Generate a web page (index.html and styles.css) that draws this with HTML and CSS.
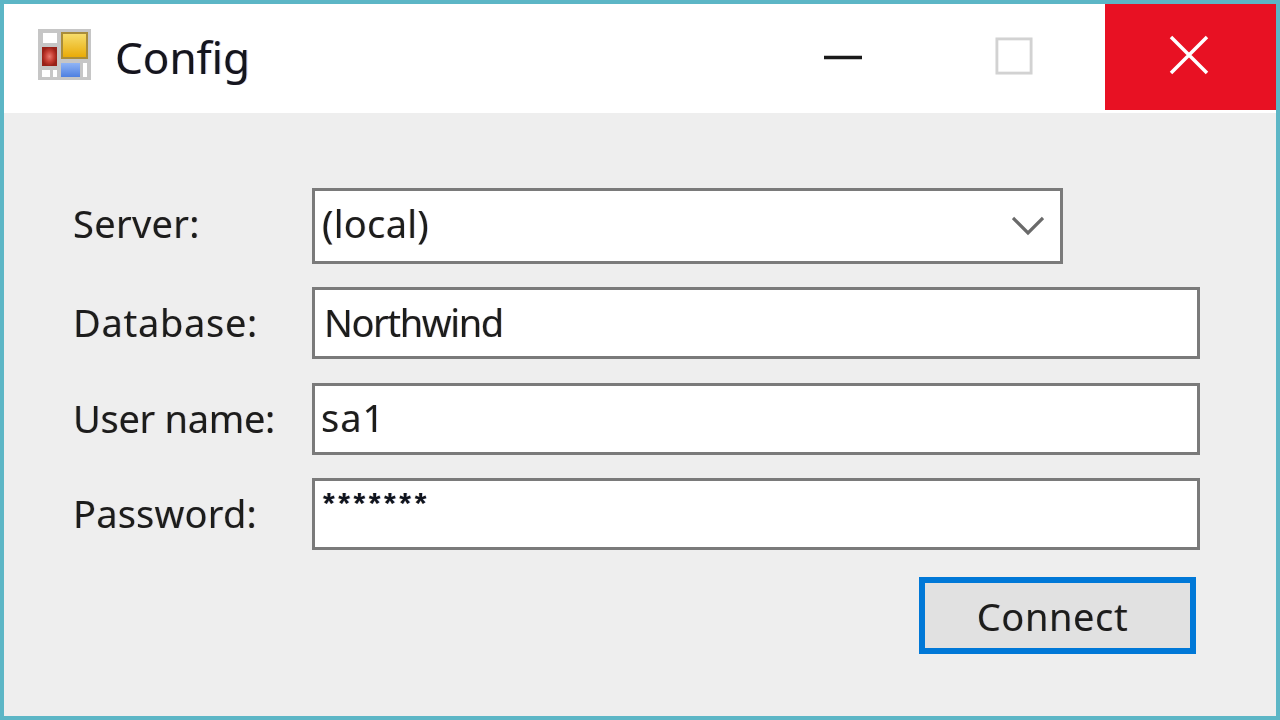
FILE: index.html
```html
<!DOCTYPE html>
<html lang="en">
<head>
<meta charset="utf-8">
<title>Config</title>
<link rel="stylesheet" href="styles.css">
</head>
<body>
<div class="window">
  <header class="titlebar">
    <svg class="app-icon" viewBox="0 0 53 51" aria-hidden="true">
      <defs>
        <linearGradient id="gold" x1="0" y1="0" x2="0" y2="1"><stop offset="0" stop-color="#f6dc6a"/><stop offset="1" stop-color="#e9ab08"/></linearGradient>
        <linearGradient id="sky" x1="0" y1="0" x2="0" y2="1"><stop offset="0" stop-color="#8fb4f5"/><stop offset="1" stop-color="#4f80e0"/></linearGradient>
        <radialGradient id="ruby"><stop offset="0" stop-color="#ea7a70"/><stop offset="0.6" stop-color="#c33a30"/><stop offset="1" stop-color="#982118"/></radialGradient>
      </defs>
      <rect width="53" height="51" fill="#c6c6c6"/>
      <rect x="5" y="4" width="14" height="10" fill="#fff"/>
      <rect x="4" y="41" width="8" height="7" fill="#fff"/>
      <rect x="15" y="41" width="4" height="7" fill="#fff"/>
      <rect x="45" y="34" width="4" height="14" fill="#fff"/>
      <rect x="4" y="18" width="15" height="19" fill="url(#ruby)"/>
      <rect x="23" y="3" width="27" height="27" fill="#a98c3a"/>
      <rect x="25" y="5" width="23" height="23" fill="url(#gold)"/>
      <rect x="23" y="34" width="19" height="14" fill="url(#sky)"/>
    </svg>
    <span class="title">Config</span>
    <div class="controls">
      <div class="ctl ctl-min">
        <svg class="glyph" viewBox="0 0 40 40" aria-hidden="true"><path d="M1 20.500H39" stroke="#1a1a1a" stroke-width="3.500"/></svg>
      </div>
      <div class="ctl ctl-max">
        <svg class="glyph" viewBox="0 0 40 40" aria-hidden="true"><rect x="2" y="2" width="36" height="36" fill="none" stroke="#d2d2d2" stroke-width="3"/></svg>
      </div>
      <div class="ctl ctl-close">
        <svg class="glyph" viewBox="0 0 40 40" aria-hidden="true"><path d="M2 2L38 38M38 2L2 38" stroke="#fff" stroke-width="3.500" fill="none"/></svg>
      </div>
    </div>
  </header>
  <main class="form">
    <div class="row row-combo">
      <label class="label label-server">Server:</label>
      <div class="field field-combo">
        <span class="value value-combo">(local)</span>
        <svg class="chevron" viewBox="0 0 32 20" aria-hidden="true"><path d="M1 2L16 17L31 2" fill="none" stroke="#6a6a6a" stroke-width="3.200"/></svg>
      </div>
    </div>
    <div class="row">
      <label class="label label-db">Database:</label>
      <div class="field field-wide"><span class="value value-db">Northwind</span></div>
    </div>
    <div class="row">
      <label class="label label-user">User name:</label>
      <div class="field field-wide"><span class="value value-sa">sa1</span></div>
    </div>
    <div class="row row-pass">
      <label class="label label-pass">Password:</label>
      <div class="field field-wide field-top"><span class="value value-pass">*******</span></div>
    </div>
    <div class="actions"><div class="button"><span class="button-text">Connect</span></div></div>
  </main>
</div>
</body>
</html>
```
FILE: styles.css
```css
* { box-sizing: border-box; }
html, body { margin: 0; padding: 0; }
body {
  width: 1280px;
  height: 720px;
  overflow: hidden;
  background: #5cb6c6;
  font-family: "Noto Sans", "Open Sans", sans-serif;
  color: #1c1c1c;
}
.window {
  width: 1280px;
  height: 720px;
  border: 4px solid #5cb6c6;
  background: #eeeeee;
  display: flex;
  flex-direction: column;
  filter: blur(0.7px);
}
.titlebar {
  height: 109px;
  background: #ffffff;
  display: flex;
  align-items: flex-start;
  flex: none;
}
.app-icon {
  width: 53px;
  height: 51px;
  margin: 25px 0 0 34px;
  flex: none;
}
.title {
  margin: 23px 0 0 24px;
  font-size: 44px;
  line-height: 60px;
  color: #14141e;
  text-shadow: -0.8px 0 rgba(255, 150, 0, 0.3), 0.8px 0 rgba(0, 90, 255, 0.3);
}
.controls {
  margin-left: auto;
  display: flex;
  height: 106px;
}
.ctl {
  width: 171px;
  display: flex;
  justify-content: center;
  align-items: center;
}
.ctl-close { background: #e81123; }
.glyph { width: 40px; height: 40px; }
.ctl-min .glyph { transform: translate(-6px, 0); }
.ctl-max .glyph { transform: translate(-6px, -1px); width: 38px; height: 38px; }
.ctl-close .glyph { transform: translate(-2px, -2px); }
.form {
  padding: 75px 76px 0 69px;
  display: flex;
  flex-direction: column;
  gap: 24px;
}
.row {
  display: flex;
  height: 72px;
  align-items: center;
}
.row-combo { height: 76px; margin-bottom: -1px; }
.row-pass { margin-top: -1px; }
.label {
  width: 239px;
  flex: none;
  font-size: 38px;
  line-height: 50px;
  margin-top: -2px;
  white-space: nowrap;
  text-shadow: -0.7px 0 rgba(255, 150, 0, 0.25), 0.7px 0 rgba(0, 90, 255, 0.25);
}
.label-server { margin-top: -6px; letter-spacing: 0.3px; }
.label-db { letter-spacing: 0.7px; }
.label-user { letter-spacing: -0.3px; }
.label-pass { letter-spacing: 0.2px; }
.field {
  height: 100%;
  background: #ffffff;
  border: 3px solid #7a7a7a;
  display: flex;
  align-items: center;
  padding-left: 7px;
  font-size: 38px;
}
.field-wide { width: 888px; }
.field-combo { width: 751px; justify-content: space-between; padding-right: 16px; }
.field-top { align-items: flex-start; }
.value {
  line-height: 50px;
  margin-top: -2px;
  white-space: nowrap;
  text-shadow: -0.7px 0 rgba(255, 150, 0, 0.25), 0.7px 0 rgba(0, 90, 255, 0.25);
}
.value-combo { margin-top: -7px; letter-spacing: 0.3px; }
.value-db { margin-left: 2px; letter-spacing: -1.4px; }
.value-sa { letter-spacing: 1px; margin-left: -1px; margin-top: -4px; }
.value-pass {
  font-family: "Liberation Sans", sans-serif;
  font-size: 30px;
  font-weight: 700;
  letter-spacing: 3.6px;
  line-height: 40px;
  margin-top: 2px;
  margin-left: 1px;
  color: #10141e;
}
.chevron { width: 32px; height: 20px; }
.actions {
  display: flex;
  justify-content: flex-end;
  margin-top: 3px;
}
.button {
  width: 277px;
  height: 77px;
  margin-right: 4px;
  padding-right: 10px;
  background: #e1e1e1;
  border: 6px solid #0078d7;
  display: flex;
  justify-content: center;
  align-items: center;
  font-size: 38px;
}
.button-text {
  letter-spacing: 0.6px;
  text-shadow: -0.7px 0 rgba(255, 150, 0, 0.25), 0.7px 0 rgba(0, 90, 255, 0.25);
}
```
